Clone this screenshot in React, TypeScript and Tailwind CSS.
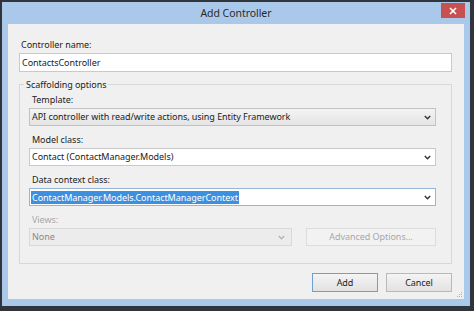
import React from "react";

const FONT = { fontFamily: '"Noto Sans", "Open Sans", Arial, sans-serif' };

function Chevron({ color = "#333" }: { color?: string }) {
  return (
    <svg width="7" height="5" viewBox="0 0 7 5" className="shrink-0">
      <polyline points="0.8,1 3.5,3.8 6.2,1" fill="none" stroke={color} strokeWidth="1.4" />
    </svg>
  );
}

function Field({
  label,
  disabled,
  children,
}: {
  label: string;
  disabled?: boolean;
  children: React.ReactNode;
}) {
  return (
    <div className="flex flex-col gap-[2px]">
      <div
        className={
          "h-[13px] pl-[3px] text-[9px] leading-[13px] " +
          (disabled ? "text-[#a8a8a8]" : "text-[#222]")
        }
      >
        {label}
      </div>
      {children}
    </div>
  );
}

export default function App() {
  return (
    <div
      className="flex h-[311px] w-[474px] flex-col bg-[#30353c] pb-[5px] pl-[2px] pr-[4px] pt-[2px] tracking-[-0.05px]"
      style={FONT}
    >
      <div className="flex flex-1 flex-col bg-[#aac8ea] px-[6px] pb-[7px]">
        {/* Title bar */}
        <div className="grid h-[22px] grid-cols-[1fr_auto_1fr] items-start">
          <div />
          <div className="pt-[3px] text-[10.5px] leading-[17px] text-[#2a2a2a]">Add Controller</div>
          <div className="flex justify-end">
            <div className="-mr-[1px] mt-[1px] flex h-[15px] w-[24px] items-center justify-center bg-[#c75050]">
              <svg width="8" height="8" viewBox="0 0 8 8">
                <line x1="1" y1="1" x2="7" y2="7" stroke="#fff" strokeWidth="1.6" />
                <line x1="7" y1="1" x2="1" y2="7" stroke="#fff" strokeWidth="1.6" />
              </svg>
            </div>
          </div>
        </div>

        {/* Content */}
        <div className="relative flex flex-1 flex-col bg-[#f0f0f0] pl-[11px] pr-[12px] pt-[14px]">
          <div className="flex flex-col gap-[2px]">
            <div className="h-[13px] pl-[2px] text-[9px] leading-[13px] text-[#222]">Controller name:</div>
            <div className="flex h-[19px] items-center border border-[#c9c9c9] bg-white pl-[2px] text-[9px] text-[#222]">
              ContactsController
            </div>
          </div>

          <fieldset className="mt-[6px] border border-[#d8d8d8] p-0">
            <legend className="ml-[4px] h-[13px] px-[2px] text-[9px] leading-[13px] text-[#222]">
              Scaffolding options
            </legend>
            <div className="flex flex-col gap-[7px] pb-[17px] pl-[9px] pr-[15px] pt-[2px]">
              <Field label="Template:">
                <div className="flex h-[18px] items-center justify-between border border-[#c2c2c2] bg-gradient-to-b from-[#f4f4f4] to-[#e4e4e4] pl-[2px] pr-[4px] text-[9px] text-[#222]">
                  <span>API controller with read/write actions, using Entity Framework</span>
                  <Chevron />
                </div>
              </Field>
              <Field label="Model class:">
                <div className="flex h-[18px] items-center justify-between border border-[#c9c9c9] bg-white pl-[2px] pr-[4px] text-[9px] text-[#222]">
                  <span>Contact (ContactManager.Models)</span>
                  <Chevron />
                </div>
              </Field>
              <Field label="Data context class:">
                <div className="flex h-[18px] items-center justify-between border border-[#93b6d8] bg-white pl-[1px] pr-[4px] text-[9px]">
                  <span className="bg-[#3d8fe0] px-[1px] leading-[13px] text-white">
                    ContactManager.Models.ContactManagerContext
                  </span>
                  <Chevron />
                </div>
              </Field>
              <Field label="Views:" disabled>
                <div className="flex gap-[14px]">
                  <div className="flex h-[18px] w-[263px] items-center justify-between border border-[#d9d9d9] bg-[#ececec] pl-[2px] pr-[6px] text-[9px] text-[#8a8a8a]">
                    <span>None</span>
                    <Chevron color="#b5b5b5" />
                  </div>
                  <div className="flex h-[18px] flex-1 items-center justify-center border border-[#dcdcdc] bg-[#f2f2f2] text-[9px] text-[#a8a8a8]">
                    Advanced Options...
                  </div>
                </div>
              </Field>
            </div>
          </fieldset>

          <div className="mt-[9px] flex justify-end gap-[8px]">
            <div className="flex h-[19px] w-[66px] items-center justify-center border border-[#6f9fcf] bg-gradient-to-b from-[#f4f4f4] to-[#e2e2e2] text-[9px] text-[#222]">
              Add
            </div>
            <div className="flex h-[19px] w-[66px] items-center justify-center border border-[#b9b9b9] bg-gradient-to-b from-[#f4f4f4] to-[#e2e2e2] text-[9px] text-[#222]">
              Cancel
            </div>
          </div>

          {/* resize grip */}
          <svg width="6" height="6" viewBox="0 0 6 6" className="absolute bottom-[1px] right-[1px]">
            <rect x="4" y="0" width="1" height="1" fill="#b0b0b0" />
            <rect x="2" y="2" width="1" height="1" fill="#b0b0b0" />
            <rect x="4" y="2" width="1" height="1" fill="#b0b0b0" />
            <rect x="0" y="4" width="1" height="1" fill="#b0b0b0" />
            <rect x="2" y="4" width="1" height="1" fill="#b0b0b0" />
            <rect x="4" y="4" width="1" height="1" fill="#b0b0b0" />
          </svg>
        </div>
      </div>
    </div>
  );
}
